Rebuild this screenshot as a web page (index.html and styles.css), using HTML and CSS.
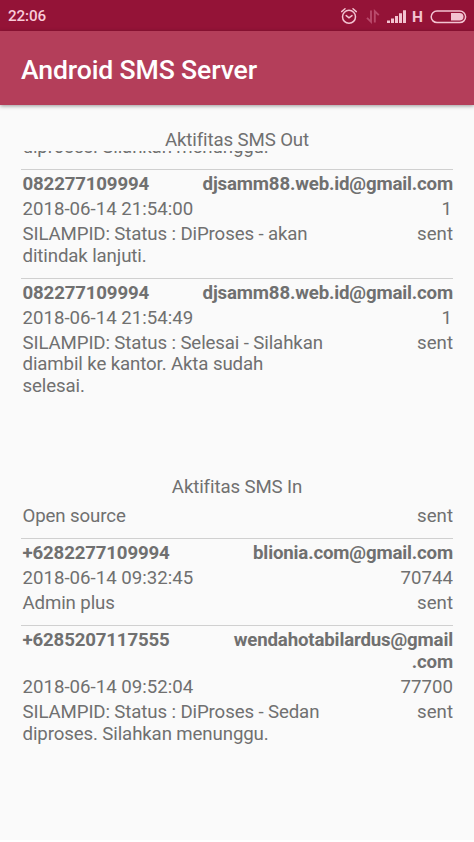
FILE: index.html
```html
<!DOCTYPE html>
<html lang="id">
<head>
    <meta charset="UTF-8">
    <meta name="viewport" content="width=device-width, initial-scale=1.0">
    <title>Android SMS Server</title>
    <link rel="stylesheet" href="styles.css">
</head>
<body>
    <div class="status-bar">
        <span class="time">22:06</span>
        <svg class="status-icons" width="128" height="22" viewBox="0 0 128 22">
            <!-- alarm -->
            <g fill="none" stroke="#f3c3d1" stroke-width="1.5" stroke-linecap="round">
                <circle cx="9" cy="10.8" r="6.5"/>
                <path d="M1.7 5.6 5 2.8M16.3 5.6 13 2.8M6.2 9.6l2.8 2.3 3-2.3"/>
            </g>
            <!-- data arrows -->
            <g fill="none" stroke="#b94a6b" stroke-width="1.9">
                <path d="M31 4.5v11.3L27 11.8M34.8 16.5V5.2l4 4"/>
            </g>
            <!-- signal -->
            <g fill="#f3c3d1">
                <path d="M47 14.5h3V17h-3zM51 12.5h3V17h-3zM55 10h3v7h-3zM59 7.3h3V17h-3zM63 4.3h3V17h-3z"/>
            </g>
            <text class="network" x="72" y="16">H</text>
            <!-- battery -->
            <rect x="91.2" y="5" width="34.4" height="11.6" rx="5.8" fill="none" stroke="#f3c3d1" stroke-width="1.5"/>
            <path d="M111 7h8.7a3.8 3.8 0 0 1 0 7.6H111z" fill="#f3c3d1"/>
        </svg>
    </div>
    <div class="app-bar">
        <h1>Android SMS Server</h1>
    </div>

    <div class="content">
        <h2>Aktifitas SMS Out</h2>
        <div class="list list-out">
            <div class="item">
                <div class="row">
                    <span class="message">diproses. Silahkan menunggu.</span>
                </div>
            </div>
            <div class="item">
                <div class="row head"><span>082277109994</span><span>djsamm88.web.id@gmail.com</span></div>
                <div class="row"><span>2018-06-14 21:54:00</span><span class="count">1</span></div>
                <div class="row">
                    <span class="message">SILAMPID: Status : DiProses - akan<br>ditindak lanjuti.</span>
                    <span>sent</span>
                </div>
            </div>
            <div class="item">
                <div class="row head"><span>082277109994</span><span>djsamm88.web.id@gmail.com</span></div>
                <div class="row"><span>2018-06-14 21:54:49</span><span class="count">1</span></div>
                <div class="row">
                    <span class="message">SILAMPID: Status : Selesai - Silahkan diambil ke kantor. Akta sudah<br>selesai.</span>
                    <span>sent</span>
                </div>
            </div>
        </div>

        <h2>Aktifitas SMS In</h2>
        <div class="list list-in">
            <div class="item">
                <div class="row"><span class="message">Open source</span><span>sent</span></div>
            </div>
            <div class="item">
                <div class="row head"><span>+6282277109994</span><span>blionia.com@gmail.com</span></div>
                <div class="row"><span>2018-06-14 09:32:45</span><span>70744</span></div>
                <div class="row"><span class="message">Admin plus</span><span>sent</span></div>
            </div>
            <div class="item">
                <div class="row head"><span>+6285207117555</span><span>wendahotabilardus@gmail<br>.com</span></div>
                <div class="row"><span>2018-06-14 09:52:04</span><span>77700</span></div>
                <div class="row">
                    <span class="message">SILAMPID: Status : DiProses - Sedan diproses. Silahkan menunggu.</span>
                    <span>sent</span>
                </div>
            </div>
        </div>
    </div>
</body>
</html>
```
FILE: styles.css
```css
* {
    box-sizing: border-box;
}
body {
    margin: 0;
    height: 842px;
    display: flex;
    flex-direction: column;
    overflow: hidden;
    font-family: Roboto, sans-serif;
    font-size: 18.67px;
    line-height: 21.7px;
    color: #707070;
    background-color: #fafafa;
    border-bottom: 2px solid #fff;
}
.status-bar {
    height: 31px;
    flex: none;
    display: flex;
    align-items: center;
    justify-content: space-between;
    padding: 2px 6px 0 8px;
    background-color: #941337;
    color: #f9cbd9;
}
.time {
    font-size: 15.2px;
    font-weight: 500;
    letter-spacing: -0.1px;
}
.network {
    font-size: 15.5px;
    font-weight: 700;
    fill: #f3c3d1;
}
.app-bar {
    height: 74px;
    flex: none;
    display: flex;
    align-items: center;
    padding: 4px 21px 0;
    background-color: #b43e5a;
    box-shadow: 0 1px 4px rgba(0,0,0,0.4);
}
h1 {
    margin: 0;
    font-size: 26.6px;
    font-weight: 500;
    line-height: 32px;
    letter-spacing: -0.14px;
    color: #fff;
}
.content {
    padding: 25px 21px 0;
}
h2 {
    margin: 0;
    font-size: inherit;
    font-weight: 400;
    text-align: center;
    letter-spacing: -0.12px;
    height: 22px;
}
.list {
    display: flex;
    flex-direction: column;
    overflow: hidden;
}
/* scrolled to the last message */
.list-out {
    height: 257.4px;
    justify-content: flex-end;
    margin-top: -1px;
    margin-bottom: 68.6px;
}
.list-in {
    padding-top: 3.5px;
}
.item {
    flex: none;
    display: flex;
    flex-direction: column;
    gap: 3.3px;
    padding: 3.8px 0 10.5px 1.5px;
}
.item + .item {
    border-top: 1px solid #d0d0d0;
}
.row {
    display: flex;
    justify-content: space-between;
    text-align: right;
}
.row span:first-child {
    text-align: left;
}
.head {
    font-weight: 700;
    letter-spacing: -0.16px;
}
.message {
    width: 305px;
    letter-spacing: -0.12px;
}
.count {
    padding-right: 1px;
}
```
